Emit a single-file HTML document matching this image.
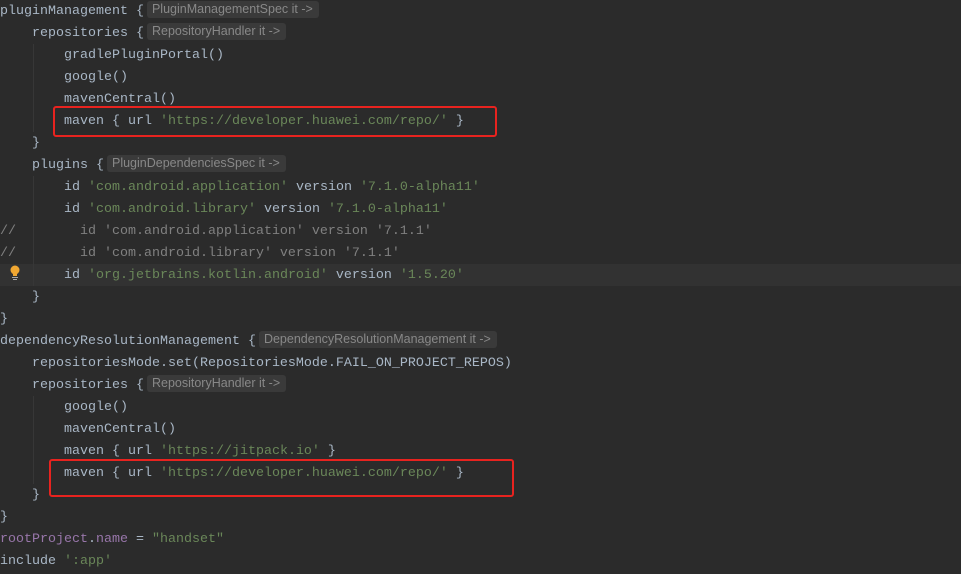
<!DOCTYPE html>
<html><head><meta charset="utf-8"><style>
html,body{margin:0;padding:0;background:#2b2b2b;width:961px;height:574px;overflow:hidden}
.l{position:absolute;left:0;margin-top:1px;height:22px;line-height:22px;white-space:pre;font-family:"Liberation Mono",monospace;font-size:13.33px;color:#a9b7c6}
.s{color:#6a8759}.c{color:#808080}.p{color:#9876aa}
.h{display:inline-block;font-family:"Liberation Sans",sans-serif;font-size:12.5px;color:#888;background:#3a3a3a;border-radius:3px;padding:0 6px 0 5px;line-height:17px;margin-left:3px;vertical-align:1px}
.box{position:absolute;border:2px solid #e8231f;border-radius:3px}
.g{position:absolute;width:1px;background:#373737}
</style></head><body>
<div style="position:absolute;left:0;top:264px;width:961px;height:22px;background:#323232"></div>
<div class="g" style="left:33px;top:44px;height:88px"></div>
<div class="g" style="left:33px;top:176px;height:110px"></div>
<div class="g" style="left:33px;top:396px;height:88px"></div>
<div class="l" style="top:0">pluginManagement {<span class="h">PluginManagementSpec it -&gt;</span></div>
<div class="l" style="top:22px">    repositories {<span class="h">RepositoryHandler it -&gt;</span></div>
<div class="l" style="top:44px">        gradlePluginPortal()</div>
<div class="l" style="top:66px">        google()</div>
<div class="l" style="top:88px">        mavenCentral()</div>
<div class="l" style="top:110px">        maven { url <span class="s">'https://developer.huawei.com/repo/'</span> }</div>
<div class="l" style="top:132px">    }</div>
<div class="l" style="top:154px">    plugins {<span class="h">PluginDependenciesSpec it -&gt;</span></div>
<div class="l" style="top:176px">        id <span class="s">'com.android.application'</span> version <span class="s">'7.1.0-alpha11'</span></div>
<div class="l" style="top:198px">        id <span class="s">'com.android.library'</span> version <span class="s">'7.1.0-alpha11'</span></div>
<div class="l c" style="top:220px">//        id 'com.android.application' version '7.1.1'</div>
<div class="l c" style="top:242px">//        id 'com.android.library' version '7.1.1'</div>
<div class="l" style="top:264px">        id <span class="s">'org.jetbrains.kotlin.android'</span> version <span class="s">'1.5.20'</span></div>
<div class="l" style="top:286px">    }</div>
<div class="l" style="top:308px">}</div>
<div class="l" style="top:330px">dependencyResolutionManagement {<span class="h">DependencyResolutionManagement it -&gt;</span></div>
<div class="l" style="top:352px">    repositoriesMode.set(RepositoriesMode.FAIL_ON_PROJECT_REPOS)</div>
<div class="l" style="top:374px">    repositories {<span class="h">RepositoryHandler it -&gt;</span></div>
<div class="l" style="top:396px">        google()</div>
<div class="l" style="top:418px">        mavenCentral()</div>
<div class="l" style="top:440px">        maven { url <span class="s">'https://jitpack.io'</span> }</div>
<div class="l" style="top:462px">        maven { url <span class="s">'https://developer.huawei.com/repo/'</span> }</div>
<div class="l" style="top:484px">    }</div>
<div class="l" style="top:506px">}</div>
<div class="l" style="top:528px"><span class="p">rootProject</span>.<span class="p">name</span> = <span class="s">"handset"</span></div>
<div class="l" style="top:550px">include <span class="s">':app'</span></div>
<svg style="position:absolute;left:9px;top:265px" width="12" height="16" viewBox="0 0 12 16"><circle cx="6" cy="5" r="4.5" fill="#f0a732"/><rect x="4" y="9" width="4" height="2" fill="#f0a732"/><rect x="3" y="12" width="6" height="1" fill="#aaa"/><rect x="4" y="14" width="4" height="1" fill="#aaa"/></svg>
<div class="box" style="left:53px;top:106px;width:440px;height:27px"></div>
<div class="box" style="left:49px;top:459px;width:461px;height:34px"></div>
</body></html>
